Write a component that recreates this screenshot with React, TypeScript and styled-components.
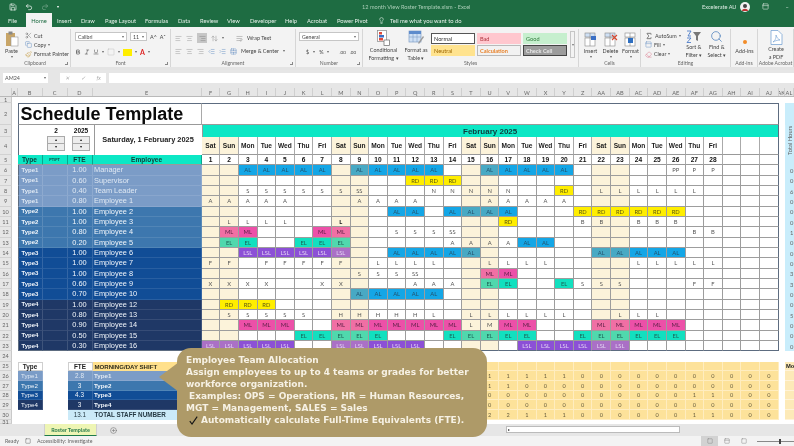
import styled, { createGlobalStyle } from "styled-components";
import {
  AlignCenter,
  AlignLeft,
  AlignRight,
  ArrowUpDown,
  Bold,
  CirclePlus,
  Copy,
  Eraser,
  IndentDecrease,
  IndentIncrease,
  Italic,
  Lightbulb,
  Paintbrush,
  PanelTop,
  Redo2,
  Save,
  Scissors,
  Search,
  Sigma,
  Square,
  TableCellsMerge,
  Underline,
  Undo2,
  WrapText,
} from "lucide-react";

const GlobalStyle = createGlobalStyle`
  html, body { margin: 0; padding: 0; background: #fff; }
  * { box-sizing: border-box; }
`;

const SHEET_COLUMNS =
  "12px 5.5px 25px 25px 25px 109.2px repeat(31, 18.613px) 6.3px 1fr";
const SHEET_ROWS =
  "6px 22px 12px 18px repeat(19, 10.33px) 10.3px repeat(6, 9.7px) 4.2px";
const UI_FONT = `Lato, "Open Sans", sans-serif`;
const CELL_FONT = `"Liberation Sans", Arial, sans-serif`;

const TYPE_COLORS: Record<number, string> = {
  1: "#7b9cc7",
  2: "#3d77ae",
  3: "#114d96",
  4: "#1f3866",
};

const CODE_FILLS: Record<string, [string, string]> = {
  AL: ["#14a6e6", "#48a9c4"],
  ML: ["#ec50a8", "#f06fa4"],
  EL: ["#12e0bf", "#50d8ad"],
  LSL: ["#8c50d6", "#aa70c6"],
  RD: ["#ffee00", "#ffee00"],
};

const CODE_TEXT: Record<string, string> = {
  AL: "#24536e",
  ML: "#5e2148",
  EL: "#1c5f54",
  LSL: "#e2d4f2",
  RD: "#5c5610",
};

const Page = styled.div`
  position: relative;
  width: 794px;
  height: 446px;
  overflow: hidden;
  display: flex;
  flex-direction: column;
  font-family: ${UI_FONT};
  filter: blur(0.3px);
`;

const TitleBar = styled.div`
  height: 13px;
  background: #1e6c42;
  display: flex;
  align-items: center;
  color: #cfe3d6;
  font-size: 5.6px;
`;

const QuickAccess = styled.div`
  width: 362px;
  padding-left: 9px;
  display: flex;
  align-items: center;
  gap: 8px;
  color: #fff;
`;

const DocTitle = styled.div`
  width: 340px;
  white-space: nowrap;
  color: #a9cdb6;
`;

const Account = styled.div`
  display: flex;
  align-items: center;
  gap: 4px;
  color: #dcebe2;
`;

const Avatar = styled.div`
  width: 10px;
  height: 10px;
  border-radius: 50%;
  background: #f2f2f2;
  display: flex;
  align-items: center;
  justify-content: center;
`;

const Nudge = styled.span<{ $left: number }>`
  display: inline-flex;
  align-items: center;
  margin-left: ${({ $left }) => $left}px;
`;

const TinyCaret = styled.span`
  font-size: 4px;
`;

const TabBar = styled.div`
  height: 14px;
  background: #1e6c42;
  display: flex;
  align-items: stretch;
  padding-left: 8px;
  color: #e6f1ea;
  font-size: 5.8px;
`;

const TabItem = styled.div<{ $width: number; $active?: boolean }>`
  flex: none;
  width: ${({ $width }) => $width}px;
  margin-right: ${({ $active }) => ($active ? 5 : 0)}px;
  display: flex;
  align-items: center;
  justify-content: ${({ $active }) => ($active ? "center" : "flex-start")};
  white-space: nowrap;
  background: ${({ $active }) => ($active ? "#f3f3f3" : "transparent")};
  color: ${({ $active }) => ($active ? "#1e6c42" : "inherit")};
`;

const TellMe = styled.div`
  display: flex;
  align-items: center;
  gap: 5px;
  white-space: nowrap;
`;

const Ribbon = styled.div`
  height: 43px;
  background: #f3f3f3;
  border-bottom: 3px solid #e4e4e4;
  display: flex;
  color: #444;
  font-size: 5.4px;
`;

const Group = styled.div<{ $width: number }>`
  width: ${({ $width }) => $width}px;
  flex: none;
  margin: 2px 0 0;
  border-right: 1px solid #d6d6d6;
  display: flex;
  flex-direction: column;
`;

const GroupBody = styled.div`
  flex: 1;
  min-height: 0;
  display: flex;
  padding: 1px 3px 0;
  gap: 3px;
`;

const GroupFooter = styled.div`
  height: 8px;
  display: grid;
  grid-template-columns: 1fr auto 1fr;
  align-items: center;
  color: #666;
  font-size: 5.1px;
  white-space: nowrap;
`;

const Launcher = styled.span`
  grid-column: 3;
  justify-self: end;
  margin-right: 2px;
  width: 3px;
  height: 3px;
  border-right: 1px solid #888;
  border-bottom: 1px solid #888;
`;

const FooterText = styled.span`
  grid-column: 2;
`;

const Stack = styled.div<{ $gap?: number; $top?: number; $left?: number }>`
  display: flex;
  flex-direction: column;
  gap: ${({ $gap }) => $gap ?? 0}px;
  padding-top: ${({ $top }) => $top ?? 0}px;
  padding-left: ${({ $left }) => $left ?? 0}px;
`;

const Line = styled.div<{ $gap?: number; $h?: number }>`
  display: flex;
  align-items: center;
  gap: ${({ $gap }) => $gap ?? 2}px;
  height: ${({ $h }) => $h ?? 10}px;
  white-space: nowrap;
`;

const LargeButton = styled.div<{ $width: number }>`
  width: ${({ $width }) => $width}px;
  flex: none;
  display: flex;
  flex-direction: column;
  align-items: center;
  text-align: center;
  line-height: 7.5px;
  white-space: nowrap;
`;

const IconSlot = styled.div`
  height: 17px;
  display: flex;
  align-items: flex-end;
  justify-content: center;
  margin-bottom: 1px;
`;

const Caret = styled.span`
  display: inline-block;
  width: 0;
  height: 0;
  border-left: 1.5px solid transparent;
  border-right: 1.5px solid transparent;
  border-top: 2px solid #666;
`;

const SelectBox = styled.div<{ $width: number }>`
  width: ${({ $width }) => $width}px;
  height: 9px;
  background: #fff;
  border: 1px solid #c6c6c6;
  display: flex;
  align-items: center;
  justify-content: space-between;
  padding: 0 2px;
  font-size: 5.2px;
`;

const ActiveTool = styled.div`
  width: 10px;
  height: 10px;
  background: #c6c6c6;
  display: flex;
  align-items: center;
  justify-content: center;
`;

const FillSwatch = styled.span`
  width: 9px;
  height: 7px;
  background: #ffee00;
`;

const FontColorGlyph = styled.span`
  color: #d22;
  font-weight: 700;
  font-size: 7px;
`;

const DecimalGlyph = styled.span`
  font-size: 4.5px;
`;

const AddinDot = styled.span`
  width: 4px;
  height: 4px;
  border-radius: 50%;
  background: #f28c28;
  margin-bottom: 3px;
`;

const StyleGallery = styled.div`
  display: grid;
  grid-template-columns: repeat(3, 44px);
  grid-template-rows: repeat(2, 11px);
  gap: 1px 2px;
  margin-top: 3px;
`;

const StyleChip = styled.div<{ $bg: string; $fg: string; $border: string; $bold?: boolean }>`
  background: ${({ $bg }) => $bg};
  color: ${({ $fg }) => $fg};
  border: 1px solid ${({ $border }) => $border};
  font-weight: ${({ $bold }) => ($bold ? 700 : 400)};
  font-size: 5.6px;
  padding-left: 2px;
  display: flex;
  align-items: center;
`;

const GalleryScroll = styled.div`
  width: 11px;
  height: 27px;
  margin-top: 1px;
  border: 1px solid #c6c6c6;
  background: #f3f3f3;
  display: flex;
  align-items: center;
  justify-content: center;
  color: #777;
  font-size: 4px;
`;

const FormulaBar = styled.div`
  height: 18px;
  background: #e6e6e6;
  padding: 3px 0 5px 3px;
  display: flex;
  gap: 3px;
  align-items: stretch;
  font-size: 5.4px;
  color: #555;
`;

const NameBox = styled.div`
  width: 45px;
  background: #fff;
  display: flex;
  align-items: center;
  justify-content: space-between;
  padding: 0 2px;
`;

const FormulaTools = styled.div`
  margin-left: 9px;
  width: 46px;
  background: #fff;
  display: flex;
  align-items: center;
  justify-content: space-around;
  color: #aaa;
  font-style: italic;
`;

const FormulaInput = styled.div`
  flex: 1;
  background: #fff;
`;

const ColumnHeader = styled.div`
  height: 9px;
  background: #e6e6e6;
  display: grid;
  grid-template-columns: ${SHEET_COLUMNS};
  border-bottom: 1px solid #b9b9b9;
  color: #666;
  font-size: 5.6px;
`;

const ColumnLabel = styled.div`
  display: flex;
  align-items: center;
  justify-content: center;
  border-right: 1px solid #cfcfcf;
  overflow: hidden;
`;

const Sheet = styled.div`
  height: 327px;
  display: grid;
  grid-template-columns: ${SHEET_COLUMNS};
  grid-template-rows: ${SHEET_ROWS};
  background: #fff;
  overflow: hidden;
`;

const RowNumber = styled.div`
  background: #e6e6e6;
  border-right: 1px solid #c9c9c9;
  border-bottom: 1px solid #d2d2d2;
  display: flex;
  align-items: center;
  justify-content: center;
  color: #666;
  font-size: 5.6px;
`;

const Blank = styled.div<{ $span?: number }>`
  grid-column: span ${({ $span }) => $span ?? 1};
`;

const TitleCell = styled.div`
  grid-column: span 4;
  border: 1px solid #5d6c80;
  border-right: 1px solid #a9a9a9;
  border-bottom: 1px solid #999;
  display: flex;
  align-items: center;
  padding-left: 2px;
  font: 700 18px ${CELL_FONT};
  color: #0a0a0a;
  white-space: nowrap;
`;

const TitleRest = styled.div`
  grid-column: span 31;
  border-top: 1px solid #5d6c80;
  border-right: 1px solid #5d6c80;
  border-bottom: 1px solid #999;
`;

const PeriodBlock = styled.div`
  grid-column: span 4;
  grid-row: span 2;
  display: grid;
  grid-template-columns: 25px 25px 25px 1fr;
  border-left: 1px solid #5d6c80;
  font-family: ${CELL_FONT};
  color: #111;
`;

const PeriodField = styled.div`
  display: flex;
  flex-direction: column;
  align-items: center;
  font-weight: 700;
  font-size: 6.5px;
  padding-top: 2px;
  gap: 2px;
`;

const Spinner = styled.div`
  width: 18px;
  height: 15px;
  display: flex;
  flex-direction: column;
  border: 1px solid #aaa;
  background: #aaa;
  gap: 1px;
`;

const SpinnerButton = styled.div`
  flex: 1;
  background: #ededed;
  display: flex;
  align-items: center;
  justify-content: center;
  font-size: 3.6px;
  color: #222;
`;

const PeriodDate = styled.div`
  border-left: 1px solid #999;
  display: flex;
  justify-content: center;
  padding-top: 10px;
  font-weight: 700;
  font-size: 7.4px;
  white-space: nowrap;
  color: #222;
`;

const MonthBanner = styled.div`
  grid-column: span 31;
  background: #0ce7c5;
  border-right: 1px solid #5d6c80;
  border-left: 1px solid #999;
  display: flex;
  align-items: center;
  justify-content: center;
  font: 700 8px ${CELL_FONT};
  color: #0d3a3c;
`;

const DayName = styled.div<{ $weekend?: boolean; $last?: boolean }>`
  background: ${({ $weekend }) => ($weekend ? "#fcf3da" : "#fff")};
  border-right: 1px solid ${({ $last }) => ($last ? "#5d6c80" : "#aaa")};
  border-bottom: 1px solid #999;
  display: flex;
  align-items: center;
  justify-content: center;
  font: 700 6.6px ${CELL_FONT};
  color: #1a1a1a;
`;

const DayNumber = styled(DayName)`
  font-size: 6.6px;
  color: #111;
`;

const HeadCell = styled.div<{ $small?: boolean }>`
  background: #0ce7c5;
  border-right: 1px solid #0aa58e;
  border-bottom: 1px solid #999;
  display: flex;
  align-items: center;
  justify-content: center;
  font: 700 ${({ $small }) => ($small ? 3.8 : 6.6)}px ${CELL_FONT};
  color: #0e3e3a;
`;

const TeamCell = styled.div<{ $type: number; $align?: string; $bold?: boolean; $size?: number; $bottom?: boolean; $edge?: boolean }>`
  background: ${({ $type }) => TYPE_COLORS[$type]};
  color: ${({ $type }) => ($type === 1 ? "#dfe8f3" : "#f1f5fa")};
  border-right: 1px solid rgba(255, 255, 255, 0.14);
  border-bottom: 1px solid ${({ $bottom }) => ($bottom ? "#5d6c80" : "rgba(255, 255, 255, 0.1)")};
  ${({ $edge }) => ($edge ? "border-left: 1px solid #5d6c80;" : "")}
  display: flex;
  align-items: center;
  justify-content: ${({ $align }) => $align ?? "center"};
  padding-left: ${({ $align }) => ($align ? 1.5 : 0)}px;
  font: ${({ $bold }) => ($bold ? 700 : 400)} ${({ $size }) => $size ?? 7.4}px ${CELL_FONT};
  white-space: nowrap;
`;

const DayCell = styled.div<{ $code?: string; $weekend?: boolean; $last?: boolean; $strong?: boolean; $bottom?: boolean }>`
  background: ${({ $code, $weekend }) =>
    $code && CODE_FILLS[$code]
      ? CODE_FILLS[$code][$weekend ? 1 : 0]
      : $weekend
        ? "#fcf3da"
        : "#fff"};
  color: ${({ $code }) => ($code && CODE_TEXT[$code]) ?? "#555"};
  border-right: 1px solid ${({ $last }) => ($last ? "#5d6c80" : "#9d9d9d")};
  border-bottom: 1px solid ${({ $bottom }) => ($bottom ? "#5d6c80" : "#9d9d9d")};
  display: flex;
  align-items: center;
  justify-content: center;
  font-family: ${UI_FONT};
  font-size: 5.8px;
  font-weight: ${({ $strong }) => ($strong ? 900 : 400)};
  ${({ $strong }) => ($strong ? "color: #222;" : "")}
`;

const SidePanel = styled.div<{ $tall?: boolean }>`
  background: #c9edfb;
  color: #666;
  font: 400 5.8px ${UI_FONT};
  padding-left: 5px;
  display: flex;
  align-items: center;
  overflow: hidden;
  white-space: nowrap;
  ${({ $tall }) =>
    $tall
      ? "grid-row: span 2; writing-mode: vertical-rl; transform: rotate(180deg); padding: 0; justify-content: flex-start;"
      : ""}
`;

const LegendHead = styled.div`
  background: #fff;
  border: 1px solid #cfcfcf;
  display: flex;
  align-items: center;
  justify-content: center;
  font: 700 6.4px ${CELL_FONT};
  color: #222;
`;

const ShiftHead = styled.div`
  background: #ffe08c;
  display: flex;
  align-items: center;
  padding-left: 2px;
  font: 700 6.1px ${CELL_FONT};
  color: #2d2a1a;
  white-space: nowrap;
`;

const TotalCell = styled.div<{ $center?: boolean }>`
  background: #cbeaf8;
  display: flex;
  align-items: center;
  justify-content: ${({ $center }) => ($center ? "center" : "flex-start")};
  padding-left: ${({ $center }) => ($center ? 0 : 2)}px;
  font: ${({ $center }) => ($center ? 400 : 700)} 6.3px ${CELL_FONT};
  color: #263a44;
  white-space: nowrap;
`;

const CountCell = styled.div`
  background: #fde29a;
  border-right: 1px solid #ffedc0;
  border-bottom: 1px solid #ffedc0;
  display: flex;
  align-items: center;
  justify-content: center;
  font: 400 5.6px ${UI_FONT};
  color: #6a6040;
`;

const ShiftSide = styled.div`
  background: #fdeab8;
  border-bottom: 1px solid #fff3d8;
  padding-left: 1px;
  display: flex;
  align-items: center;
  font: 700 5.8px ${CELL_FONT};
  color: #222;
  overflow: hidden;
`;

const SheetTabs = styled.div`
  height: 12px;
  background: #e6e6e6;
  display: flex;
  align-items: stretch;
  font-size: 5.4px;
  color: #777;
`;

const SheetTab = styled.div`
  margin-left: 44px;
  width: 53px;
  background: #eef5b4;
  border-bottom: 1px solid #1e7a4a;
  border-left: 1px solid #cfcfcf;
  border-right: 1px solid #cfcfcf;
  display: flex;
  align-items: center;
  justify-content: center;
  font-weight: 700;
  color: #2a7c4e;
  white-space: nowrap;
`;

const AddSheet = styled.div`
  margin-left: 13px;
  display: flex;
  align-items: center;
  color: #777;
`;

const ScrollTrack = styled.div`
  margin: 2px 0 3px 389px;
  width: 174px;
  background: #fff;
  border: 1px solid #bbb;
  display: flex;
  align-items: center;
  padding-left: 1px;
  font-size: 4px;
  color: #333;
`;

const StatusBar = styled.div`
  height: 10px;
  background: #f3f3f3;
  display: flex;
  align-items: center;
  padding-left: 5px;
  color: #666;
  font-size: 5.2px;
  white-space: nowrap;
`;

const StatusLeft = styled.div`
  width: 696px;
  display: flex;
  align-items: center;
  gap: 6px;
`;

const ViewButton = styled.div<{ $active?: boolean }>`
  width: 17px;
  height: 10px;
  display: flex;
  align-items: center;
  justify-content: center;
  background: ${({ $active }) => ($active ? "#d2d2d2" : "transparent")};
  color: #888;
`;

const ZoomSlider = styled.div`
  margin-left: 5px;
  flex: 1;
  height: 1px;
  background: #888;
  display: flex;
  align-items: center;
  padding-left: 22px;
`;

const ZoomThumb = styled.span`
  width: 2px;
  height: 5px;
  background: #444;
`;

const Callout = styled.div`
  position: absolute;
  left: 177px;
  top: 348px;
  width: 310px;
  height: 89px;
  padding: 6px 0 0 9px;
  border-radius: 14px;
  background: #ae9a68;
  color: #f6f1e4;
  font: 700 9px/12px "DejaVu Sans", sans-serif;
  white-space: nowrap;

  &::before {
    content: "";
    position: absolute;
    left: -18px;
    top: 14px;
    width: 20px;
    height: 30px;
    background: #ae9a68;
    clip-path: polygon(100% 0, 0 50%, 100% 100%);
  }
`;

const CalloutLine = styled.div<{ $indent?: boolean }>`
  display: flex;
  align-items: center;
  gap: 3px;
  padding-left: ${({ $indent }) => ($indent ? 3 : 0)}px;
`;

const DAY_LABELS = ["Sat", "Sun", "Mon", "Tue", "Wed", "Thu", "Fri"];
const isWeekend = (day: number) => day <= 28 && (day % 7 === 1 || day % 7 === 2);

const columnLetters = () => {
  const result: string[] = [];
  for (let i = 5; i < 38; i++) {
    result.push(i < 26 ? String.fromCharCode(65 + i) : "A" + String.fromCharCode(65 + i - 26));
  }
  return result;
};

type Span = [string, number, number];
interface Employee {
  type: number;
  fte: string;
  name: string;
  side: string;
  spans: Span[];
}

const EMPLOYEES: Employee[] = [
  { type: 1, fte: "1.00", name: "Manager", side: "0", spans: [["AL", 3, 7], ["AL", 9, 13], ["AL", 16, 20], ["PP", 26, 26], ["P", 27, 28]] },
  { type: 1, fte: "0.60", name: "Supervisor", side: "0", spans: [["RD", 12, 14]] },
  { type: 1, fte: "0.40", name: "Team Leader", side: "6", spans: [["S", 3, 8], ["SS", 9, 9], ["N", 13, 17], ["RD", 20, 20], ["L", 22, 27]] },
  { type: 1, fte: "0.80", name: "Employee 1", side: "0", spans: [["A", 1, 5], ["A", 9, 12], ["A", 16, 20]] },
  { type: 2, fte: "1.00", name: "Employee 2", side: "0", spans: [["AL", 11, 12], ["AL", 14, 17], ["RD", 21, 26]] },
  { type: 2, fte: "1.00", name: "Employee 3", side: "0", spans: [["L", 2, 5], ["*L", 8, 8], ["RD", 17, 17], ["B", 21, 22], ["B", 24, 26]] },
  { type: 2, fte: "0.80", name: "Employee 4", side: "1", spans: [["ML", 2, 3], ["ML", 7, 8], ["S", 11, 13], ["SS", 14, 14], ["B", 27, 28]] },
  { type: 2, fte: "0.20", name: "Employee 5", side: "0", spans: [["EL", 2, 3], ["EL", 6, 8], ["A", 14, 17], ["AL", 18, 19]] },
  { type: 3, fte: "1.00", name: "Employee 6", side: "0", spans: [["LSL", 3, 8], ["AL", 11, 15], ["AL", 22, 26]] },
  { type: 3, fte: "1.00", name: "Employee 7", side: "0", spans: [["F", 1, 2], ["F", 4, 8], ["L", 10, 13], ["L", 16, 19], ["L", 24, 28]] },
  { type: 3, fte: "1.00", name: "Employee 8", side: "3", spans: [["S", 9, 11], ["SS", 12, 12], ["ML", 16, 17]] },
  { type: 3, fte: "0.60", name: "Employee 9", side: "3", spans: [["X", 1, 4], ["X", 7, 8], ["A", 12, 14], ["EL", 16, 17], ["EL", 20, 20], ["S", 21, 23], ["F", 27, 28]] },
  { type: 3, fte: "0.70", name: "Employee 10", side: "0", spans: [["AL", 9, 13]] },
  { type: 4, fte: "1.00", name: "Employee 12", side: "0", spans: [["RD", 2, 4]] },
  { type: 4, fte: "0.80", name: "Employee 13", side: "5", spans: [["S", 2, 6], ["H", 8, 12], ["L", 13, 13], ["L", 15, 20], ["L", 23, 25]] },
  { type: 4, fte: "0.90", name: "Employee 14", side: "0", spans: [["ML", 3, 5], ["ML", 8, 14], ["L", 15, 15], ["M", 16, 16], ["ML", 17, 18], ["ML", 22, 26]] },
  { type: 4, fte: "0.50", name: "Employee 15", side: "0", spans: [["EL", 6, 10], ["EL", 14, 18], ["EL", 21, 26]] },
  { type: 4, fte: "0.30", name: "Employee 16", side: "0", spans: [["LSL", 1, 5], ["LSL", 8, 12], ["LSL", 18, 23]] },
];

const LEGEND = [
  { type: 1, fte: "2.8", counts: "1 1 0 0 1 1 0 0 1 0 1 1 0 0 1 1 1 1 1 1 0 0 0 0 0 0 0 0 0 0 0" },
  { type: 2, fte: "3", counts: "0 1 1 1 0 0 0 1 0 0 1 1 0 1 1 1 1 0 0 0 0 0 0 0 0 0 0 0 0 0 0" },
  { type: 3, fte: "4.3", counts: "0 0 1 1 1 1 1 1 1 1 1 1 1 1 0 0 0 0 0 0 0 0 0 0 0 0 1 1 0 0 0" },
  { type: 4, fte: "3", counts: "1 1 1 1 1 1 0 1 1 1 1 1 0 1 0 0 0 0 0 0 0 0 0 0 0 0 0 0 0 0 0" },
];
const TOTALS = "2 3 3 4 3 3 1 3 3 2 4 4 1 2 2 2 2 1 1 1 0 0 0 0 0 0 1 1 0 0 0";

const buildCodes = (spans: Span[]) => {
  const codes: Record<number, string> = {};
  spans.forEach(([code, from, to]) => {
    for (let d = from; d <= to; d++) codes[d] = code;
  });
  return codes;
};

const days = Array.from({ length: 31 }, (_, i) => i + 1);

const PasteIcon = () => (
  <svg width="14" height="16" viewBox="0 0 14 16">
    <rect x="1" y="2" width="9" height="13" fill="#c8a567" />
    <rect x="3.5" y="0.5" width="4" height="3" fill="#888" />
    <rect x="6" y="6" width="7" height="9" fill="#fff" stroke="#999" strokeWidth="0.6" />
  </svg>
);

const CondFormatIcon = () => (
  <svg width="13" height="16" viewBox="0 0 13 16">
    <rect x="0.5" y="0.5" width="9" height="11" fill="#fff" stroke="#888" strokeWidth="0.7" />
    <rect x="2" y="2" width="3" height="2.5" fill="#e04a3a" />
    <rect x="2" y="5" width="5" height="2.5" fill="#3a6fc4" />
    <rect x="2" y="8" width="4" height="2.5" fill="#e04a3a" />
    <rect x="7" y="10" width="5.5" height="5.5" fill="#fff" stroke="#666" strokeWidth="0.7" />
  </svg>
);

const TableFormatIcon = () => (
  <svg width="17" height="16" viewBox="0 0 17 16">
    <rect x="1" y="1" width="12" height="11" fill="#cfe0f4" stroke="#7f9fc6" strokeWidth="0.7" />
    <rect x="1" y="1" width="12" height="3" fill="#5e8ccc" />
    <path d="M1 7h12M5 4v8M9 4v8" stroke="#7f9fc6" strokeWidth="0.6" />
    <path d="M10 13l5-7 1 1-5 7z" fill="#9a9a9a" />
  </svg>
);

const CellsIcon = ({ kind }: { kind: "insert" | "delete" | "format" }) => (
  <svg width="14" height="15" viewBox="0 0 14 15">
    <rect x="1" y="1" width="10" height="4" fill={kind === "format" ? "#fff" : "#cfe0f4"} stroke="#888" strokeWidth="0.6" />
    <rect x="1" y="6" width="10" height="8" fill="#fff" stroke="#888" strokeWidth="0.6" />
    <path d="M6 1v13" stroke="#888" strokeWidth="0.6" />
    {kind === "delete" && <path d="M8 3l5 5M13 3l-5 5" stroke="#d8472f" strokeWidth="1.1" />}
    {kind === "insert" && <rect x="7" y="4" width="5" height="4" fill="#3a6fc4" />}
    {kind === "format" && <rect x="4" y="6" width="5" height="5" fill="#2f6fc0" />}
  </svg>
);

const SortIcon = () => (
  <svg width="16" height="13" viewBox="0 0 16 13">
    <path d="M1 1h4L2 6h3M1 8h4L1 12.5h4" fill="none" stroke="#3a6fc4" strokeWidth="0.8" />
    <path d="M7 2h8l-3 4v5l-2-1V6z" fill="#777" />
  </svg>
);

const PdfIcon = () => (
  <svg width="13" height="15" viewBox="0 0 13 15">
    <path d="M1 .5h7l4 4v10H1z" fill="#fff" stroke="#6a9bd0" strokeWidth="0.7" />
    <path d="M3 12c3-2 3-5 3-7 1 3 2 4 4 5-3 0-5 1-7 2z" fill="none" stroke="#6a9bd0" strokeWidth="0.6" />
  </svg>
);

const CheckMark = () => (
  <svg width="9" height="9" viewBox="0 0 9 9">
    <path d="M.8 5.2L3 8 8.2.6" fill="none" stroke="#141414" strokeWidth="1.1" />
  </svg>
);

const Ic = { size: 7, strokeWidth: 1.4 };

const TABS: [string, number][] = [
  ["Insert", 24],
  ["Draw", 24],
  ["Page Layout", 40],
  ["Formulas", 33],
  ["Data", 22],
  ["Review", 27],
  ["View", 23],
  ["Developer", 35],
  ["Help", 22],
  ["Acrobat", 30],
  ["Power Pivot", 41],
];

const Footer = ({ label, launcher }: { label: string; launcher?: boolean }) => (
  <GroupFooter>
    <FooterText>{label}</FooterText>
    {launcher && <Launcher />}
  </GroupFooter>
);

const RibbonPanel = () => (
  <Ribbon>
    <Group $width={71}>
      <GroupBody>
        <LargeButton $width={17}>
          <IconSlot>
            <PasteIcon />
          </IconSlot>
          Paste
          <Caret />
        </LargeButton>
        <Stack $top={1} $left={2}>
          <Line>
            <Scissors {...Ic} color="#666" /> Cut
          </Line>
          <Line>
            <Copy {...Ic} color="#4f81bd" /> Copy <Caret />
          </Line>
          <Line>
            <Paintbrush {...Ic} color="#c79a3b" /> Format Painter
          </Line>
        </Stack>
      </GroupBody>
      <Footer label="Clipboard" launcher />
    </Group>
    <Group $width={100}>
      <GroupBody>
        <Stack $top={2} $gap={6} $left={1}>
          <Line $gap={3} $h={9}>
            <SelectBox $width={52}>
              Calibri <Caret />
            </SelectBox>
            <SelectBox $width={17}>
              11 <Caret />
            </SelectBox>
            <span>A^</span>
            <span>Aˇ</span>
          </Line>
          <Line $gap={3}>
            <Bold size={6} strokeWidth={2.5} />
            <Italic size={6} />
            <Underline size={6} />
            <Caret />
            <Square size={8} strokeWidth={1} color="#aaa" />
            <Caret />
            <FillSwatch />
            <Caret />
            <FontColorGlyph>A</FontColorGlyph>
            <Caret />
          </Line>
        </Stack>
      </GroupBody>
      <Footer label="Font" launcher />
    </Group>
    <Group $width={125}>
      <GroupBody>
        <Stack $top={3} $gap={3} $left={1}>
          <Line $gap={4}>
            <AlignLeft {...Ic} color="#888" />
            <AlignCenter {...Ic} color="#888" />
            <ActiveTool>
              <AlignRight {...Ic} color="#777" />
            </ActiveTool>
            <ArrowUpDown {...Ic} color="#777" />
            <Caret />
            <Nudge $left={8}>
              <WrapText {...Ic} color="#777" />
            </Nudge>
            Wrap Text
          </Line>
          <Line $gap={4}>
            <AlignLeft {...Ic} color="#888" />
            <AlignCenter {...Ic} color="#888" />
            <AlignRight {...Ic} color="#888" />
            <IndentDecrease {...Ic} color="#4f81bd" />
            <IndentIncrease {...Ic} color="#4f81bd" />
            <TableCellsMerge {...Ic} color="#4f81bd" /> Merge &amp; Center <Caret />
          </Line>
        </Stack>
      </GroupBody>
      <Footer label="Alignment" launcher />
    </Group>
    <Group $width={67}>
      <GroupBody>
        <Stack $top={2} $gap={6}>
          <SelectBox $width={60}>
            General <Caret />
          </SelectBox>
          <Line $gap={4}>
            <Nudge $left={7}>$</Nudge>
            <Caret />
            <span>%</span>
            <Caret />
            <Nudge $left={6}>
              <DecimalGlyph>.00</DecimalGlyph>
            </Nudge>
            <DecimalGlyph>.00</DecimalGlyph>
          </Line>
        </Stack>
      </GroupBody>
      <Footer label="Number" launcher />
    </Group>
    <Group $width={216}>
      <GroupBody>
        <LargeButton $width={35}>
          <IconSlot>
            <CondFormatIcon />
          </IconSlot>
          Conditional
          <br />
          Formatting ▾
        </LargeButton>
        <LargeButton $width={24}>
          <IconSlot>
            <TableFormatIcon />
          </IconSlot>
          Format as
          <br />
          Table ▾
        </LargeButton>
        <StyleGallery>
          <StyleChip $bg="#fff" $fg="#333" $border="#555">Normal</StyleChip>
          <StyleChip $bg="#ffc7ce" $fg="#b0353f" $border="#ffc7ce">Bad</StyleChip>
          <StyleChip $bg="#c6efce" $fg="#2f7a3c" $border="#c6efce">Good</StyleChip>
          <StyleChip $bg="#ffe38f" $fg="#9c6500" $border="#ffe38f">Neutral</StyleChip>
          <StyleChip $bg="#f2f2f2" $fg="#e8822a" $border="#b9b9b9" $bold>Calculation</StyleChip>
          <StyleChip $bg="#9c9c9c" $fg="#e8e8e8" $border="#444" $bold>Check Cell</StyleChip>
        </StyleGallery>
        <GalleryScroll>▾</GalleryScroll>
      </GroupBody>
      <Footer label="Styles" />
    </Group>
    <Group $width={62}>
      <GroupBody>
        {(["insert", "delete", "format"] as const).map((kind) => (
          <LargeButton $width={17} key={kind}>
            <IconSlot>
              <CellsIcon kind={kind} />
            </IconSlot>
            {kind[0].toUpperCase() + kind.slice(1)}
            <Caret />
          </LargeButton>
        ))}
      </GroupBody>
      <Footer label="Cells" />
    </Group>
    <Group $width={90}>
      <GroupBody>
        <Stack $top={1} $left={1}>
          <Line>
            <Sigma size={8} color="#444" /> AutoSum <Caret />
          </Line>
          <Line>
            <PanelTop {...Ic} color="#4f81bd" /> Fill <Caret />
          </Line>
          <Line>
            <Eraser {...Ic} color="#d8607a" /> Clear <Caret />
          </Line>
        </Stack>
        <LargeButton $width={20}>
          <IconSlot>
            <SortIcon />
          </IconSlot>
          Sort &amp;
          <br />
          Filter ▾
        </LargeButton>
        <LargeButton $width={20}>
          <IconSlot>
            <Search size={13} color="#4f81bd" strokeWidth={1.4} />
          </IconSlot>
          Find &amp;
          <br />
          Select ▾
        </LargeButton>
      </GroupBody>
      <Footer label="Editing" />
    </Group>
    <Group $width={27}>
      <GroupBody>
        <LargeButton $width={21}>
          <IconSlot>
            <AddinDot />
          </IconSlot>
          Add-ins
        </LargeButton>
      </GroupBody>
      <Footer label="Add-ins" />
    </Group>
    <Group $width={36}>
      <GroupBody>
        <LargeButton $width={30}>
          <IconSlot>
            <PdfIcon />
          </IconSlot>
          Create
          <br />a PDF
        </LargeButton>
      </GroupBody>
      <Footer label="Adobe Acrobat" />
    </Group>
  </Ribbon>
);

const App = () => {
  const letters = columnLetters();

  return (
    <Page>
      <GlobalStyle />
      <TitleBar>
        <QuickAccess>
          <Save size={8} strokeWidth={1.8} />
          <Undo2 size={8} strokeWidth={2} />
          <Redo2 size={8} strokeWidth={2} opacity={0.4} />
          <TinyCaret>▾</TinyCaret>
        </QuickAccess>
        <DocTitle>12 month View Roster Template.xlsm - Excel</DocTitle>
        <Account>
          Excelerate AU
          <Avatar>
            <svg width="8" height="8" viewBox="0 0 8 8">
              <circle cx="4" cy="3" r="2" fill="#444" />
              <path d="M1 8c0-3 6-3 6 0z" fill="#b33" />
            </svg>
          </Avatar>
          <Nudge $left={8}>
            <PanelTop size={7} />
          </Nudge>
          <Nudge $left={12}>–</Nudge>
        </Account>
      </TitleBar>

      <TabBar>
        <TabItem $width={18}>File</TabItem>
        <TabItem $width={26} $active>
          Home
        </TabItem>
        {TABS.map(([label, width]) => (
          <TabItem $width={width} key={label}>
            {label}
          </TabItem>
        ))}
        <TellMe>
          <Lightbulb size={7} />
          Tell me what you want to do
        </TellMe>
      </TabBar>

      <RibbonPanel />

      <FormulaBar>
        <NameBox>
          AM24 <Caret />
        </NameBox>
        <FormulaTools>
          <span>✕</span>
          <span>✓</span>
          <span>fx</span>
        </FormulaTools>
        <FormulaInput />
      </FormulaBar>

      <ColumnHeader>
        <ColumnLabel />
        <ColumnLabel>A</ColumnLabel>
        <ColumnLabel>B</ColumnLabel>
        <ColumnLabel>C</ColumnLabel>
        <ColumnLabel>D</ColumnLabel>
        <ColumnLabel>E</ColumnLabel>
        {letters.map((letter) => (
          <ColumnLabel key={letter}>{letter}</ColumnLabel>
        ))}
      </ColumnHeader>

      <Sheet>
        {/* rows 1 and 2 */}
        <RowNumber>1</RowNumber>
        <Blank $span={38} />
        <RowNumber>2</RowNumber>
        <Blank />
        <TitleCell>Schedule Template</TitleCell>
        <TitleRest />
        <Blank />
        <SidePanel />

        {/* rows 3 and 4 */}
        <RowNumber>3</RowNumber>
        <Blank />
        <PeriodBlock>
          <div />
          <PeriodField>
            2
            <Spinner>
              <SpinnerButton>▲</SpinnerButton>
              <SpinnerButton>▼</SpinnerButton>
            </Spinner>
          </PeriodField>
          <PeriodField>
            2025
            <Spinner>
              <SpinnerButton>▲</SpinnerButton>
              <SpinnerButton>▼</SpinnerButton>
            </Spinner>
          </PeriodField>
          <PeriodDate>Saturday, 1 February 2025</PeriodDate>
        </PeriodBlock>
        <MonthBanner>February 2025</MonthBanner>
        <Blank />
        <SidePanel $tall>Total Hours</SidePanel>
        <RowNumber>4</RowNumber>
        <Blank />
        {days.map((d) => (
          <DayName key={d} $weekend={isWeekend(d)} $last={d === 31}>
            {d <= 28 ? DAY_LABELS[(d - 1) % 7] : ""}
          </DayName>
        ))}
        <Blank />

        {/* row 5 */}
        <RowNumber>5</RowNumber>
        <Blank />
        <HeadCell>Type</HeadCell>
        <HeadCell $small>PT/FT</HeadCell>
        <HeadCell>FTE</HeadCell>
        <HeadCell>Employee</HeadCell>
        {days.map((d) => (
          <DayNumber key={d} $last={d === 31}>
            {d <= 28 ? d : ""}
          </DayNumber>
        ))}
        <Blank />
        <SidePanel />

        {/* staff rows */}
        {EMPLOYEES.map((employee, index) => {
          const codes = buildCodes(employee.spans);
          const last = index === EMPLOYEES.length - 1;
          return [
            <RowNumber key={`n${index}`}>{index + 6}</RowNumber>,
            <Blank key={`a${index}`} />,
            <TeamCell key={`t${index}`} $type={employee.type} $bold $size={6} $bottom={last} $edge>
              Type{employee.type}
            </TeamCell>,
            <TeamCell key={`p${index}`} $type={employee.type} $bottom={last} />,
            <TeamCell key={`f${index}`} $type={employee.type} $bottom={last}>
              {employee.fte}
            </TeamCell>,
            <TeamCell key={`e${index}`} $type={employee.type} $align="flex-start" $bottom={last}>
              {employee.name}
            </TeamCell>,
            ...days.map((d) => {
              const raw = codes[d];
              const strong = raw?.startsWith("*");
              return (
                <DayCell
                  key={`c${index}-${d}`}
                  $code={strong ? raw.slice(1) : raw}
                  $strong={strong}
                  $weekend={isWeekend(d)}
                  $last={d === 31}
                  $bottom={last}
                >
                  {strong ? raw.slice(1) : raw}
                </DayCell>
              );
            }),
            <Blank key={`k${index}`} />,
            <SidePanel key={`s${index}`}>{employee.side}</SidePanel>,
          ];
        })}

        {/* row 24 */}
        <RowNumber>24</RowNumber>
        <Blank $span={38} />

        {/* row 25 */}
        <RowNumber>25</RowNumber>
        <Blank />
        <LegendHead>Type</LegendHead>
        <Blank />
        <LegendHead>FTE</LegendHead>
        <ShiftHead>MORNING/DAY SHIFT</ShiftHead>
        {days.map((d) => (
          <CountCell key={d} />
        ))}
        <Blank />
        <ShiftSide>Mo</ShiftSide>

        {/* rows 26 to 29 */}
        {LEGEND.map((row, index) => [
          <RowNumber key={`ln${index}`}>{index + 26}</RowNumber>,
          <Blank key={`la${index}`} />,
          <TeamCell key={`lt${index}`} $type={row.type} $size={6.2}>
            Type{row.type}
          </TeamCell>,
          <Blank key={`lb${index}`} />,
          <TeamCell key={`lf${index}`} $type={row.type} $size={6.4}>
            {row.fte}
          </TeamCell>,
          <TeamCell key={`le${index}`} $type={row.type} $align="flex-start" $bold $size={6.2}>
            Type{row.type}
          </TeamCell>,
          ...row.counts.split(" ").map((count, i) => (
            <CountCell key={`lc${index}-${i}`}>{count}</CountCell>
          )),
          <Blank key={`lk${index}`} />,
          <ShiftSide key={`ls${index}`} />,
        ])}

        {/* row 30 */}
        <RowNumber>30</RowNumber>
        <Blank />
        <Blank />
        <Blank />
        <TotalCell $center>13.1</TotalCell>
        <TotalCell>TOTAL STAFF NUMBER</TotalCell>
        {TOTALS.split(" ").map((count, i) => (
          <CountCell key={i}>{count}</CountCell>
        ))}
        <Blank />
        <ShiftSide />

        <RowNumber>31</RowNumber>
        <Blank $span={38} />
      </Sheet>

      <SheetTabs>
        <SheetTab>Roster Template</SheetTab>
        <AddSheet>
          <CirclePlus size={7} />
        </AddSheet>
        <ScrollTrack>▸</ScrollTrack>
      </SheetTabs>

      <StatusBar>
        <StatusLeft>
          Ready
          <Square size={6} />
          <span>Accessibility: Investigate</span>
        </StatusLeft>
        <ViewButton $active>
          <Square size={6} />
        </ViewButton>
        <ViewButton>
          <PanelTop size={6} />
        </ViewButton>
        <ViewButton>
          <Square size={6} />
        </ViewButton>
        <ZoomSlider>
          <ZoomThumb />
        </ZoomSlider>
      </StatusBar>

      <Callout>
        <CalloutLine>Employee Team Allocation</CalloutLine>
        <CalloutLine>Assign employees to up to 4 teams or grades for better</CalloutLine>
        <CalloutLine>workforce organization.</CalloutLine>
        <CalloutLine $indent>Examples: OPS = Operations, HR = Human Resources,</CalloutLine>
        <CalloutLine>MGT = Management, SALES = Sales</CalloutLine>
        <CalloutLine $indent>
          <CheckMark />
          Automatically calculate Full-Time Equivalents (FTE).
        </CalloutLine>
      </Callout>
    </Page>
  );
};

export default App;
